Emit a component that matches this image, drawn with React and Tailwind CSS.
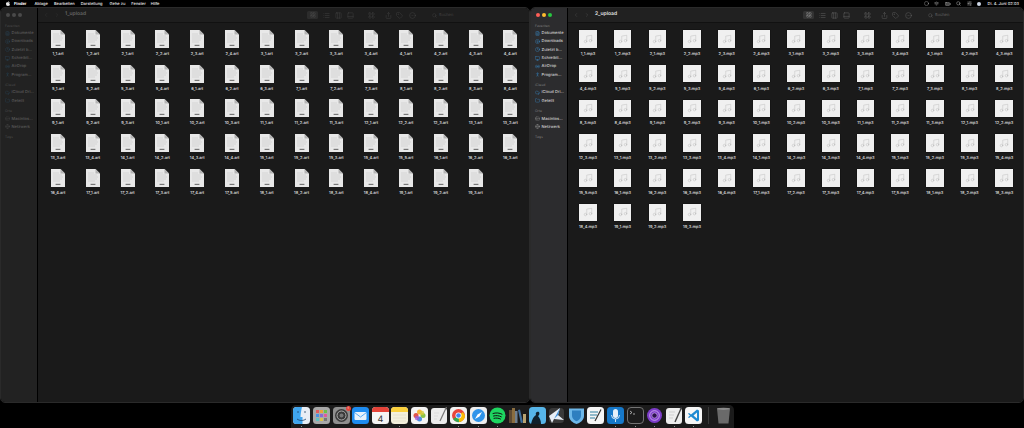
import {
  ChevronLeft,
  ChevronRight,
  Circle,
  CircleArrowDown,
  CircleEllipsis,
  Clock,
  Cloud,
  Columns3,
  FileText,
  Folder,
  Globe,
  HardDrive,
  LayoutGrid,
  List,
  Monitor,
  Music,
  PanelBottom,
  PersonStanding,
  Radio,
  Search,
  Share,
  Tag,
  Wifi,
  BatteryFull,
  SlidersHorizontal,
} from "lucide-react";

const leftFiles = [
  "1_1","1_2","2_1","2_2","2_3","2_4","3_1","3_2","3_3","3_4","4_1","4_2","4_3","4_4",
  "5_1","5_2","5_3","5_4","6_1","6_2","6_3","7_1","7_2","7_3","8_1","8_2","8_3","8_4",
  "9_1","9_2","9_3","10_1","10_2","10_3","11_1","11_2","11_3","12_1","12_2","12_3","13_1","13_2",
  "13_3","13_4","14_1","14_2","14_3","14_4","15_1","15_2","15_3","15_4","15_5","16_1","16_2","16_3",
  "16_4","17_1","17_2","17_3","17_4","17_5","18_1","18_2","18_3","18_4","19_1","19_2","19_3",
];

const rightFiles = [
  "1_1","1_2","2_1","2_2","2_3","2_4","3_1","3_2","3_3","3_4","4_1","4_2","4_3",
  "4_4","5_1","5_2","5_3","5_4","6_1","6_2","6_3","7_1","7_2","7_3","8_1","8_2",
  "8_3","8_4","9_1","9_2","9_3","10_1","10_2","10_3","11_1","11_2","11_3","12_1","12_2",
  "12_3","13_1","13_2","13_3","13_4","14_1","14_2","14_3","14_4","15_1","15_2","15_3","15_4",
  "15_5","16_1","16_2","16_3","16_4","17_1","17_2","17_3","17_4","17_5","18_1","18_2","18_3",
  "18_4","19_1","19_2","19_3",
];

const sidebar = [
  { title: "Favoriten", items: [["Dokumente", FileText], ["Downloads", CircleArrowDown], ["Zuletzt b...", Clock], ["Schreibti...", Monitor], ["AirDrop", Radio], ["Program...", PersonStanding]] },
  { title: "iCloud", items: [["iCloud Dri...", Cloud], ["Geteilt", Folder]] },
  { title: "Orte", items: [["Macintos...", HardDrive, true], ["Netzwerk", Globe, true]] },
  { title: "Tags", items: [] },
];

function ArtIcon() {
  return (
    <svg viewBox="0 0 14 18" className="w-[14px] h-[18px]">
      <path d="M0 0H9.5L14 4.5V18H0Z" fill="#e8e8e8" />
      <path d="M9.5 0V4.5H14Z" fill="#b4b4b4" />
      <path d="M2 4H8M2 6H11M2 8H12M2 10H11M2 12H9" stroke="#cccccc" strokeWidth="0.7" />
      <rect x="4.6" y="14.8" width="4.8" height="1.2" fill="#777777" />
    </svg>
  );
}

function Mp3Icon() {
  return (
    <div className="w-[17.5px] h-[17.5px] bg-[#f0f0f0] flex items-center justify-center shadow-[0_0_1px_#000]">
      <Music size={10} strokeWidth={1} color="#b5b5b5" />
    </div>
  );
}

function FileGrid({ names, ext, cols, Icon }) {
  return (
    <div className={`flex-1 bg-[#1a1a1a] pt-[7px] pl-[2.6px] grid content-start auto-rows-[34.7px] ${cols}`}>
      {names.map((name) => (
        <div key={name} className="flex flex-col items-center">
          <div className="h-[18px] flex items-center">
            <Icon />
          </div>
          <span className="mt-[3px] text-[4px] leading-[5px] font-medium text-[#e4e4e4] whitespace-nowrap">
            {name}.{ext}
          </span>
        </div>
      ))}
    </div>
  );
}

function Sidebar({ active }) {
  const headColor = active ? "text-[#7f7f7f]" : "text-[#4c4c4c]";
  const textColor = active ? "text-[#cfcfcf]" : "text-[#5a5a5a]";
  return (
    <div className={`w-[37px] h-full shrink-0 pl-[4px] border-r border-black ${active ? "bg-[#2c2c2e]" : "bg-[#222222]"}`}>
      <div className="flex gap-[2.5px] h-[14px] items-center pl-[1px]">
        <span className={`w-[3.6px] h-[3.6px] rounded-full ${active ? "bg-[#ff5f57]" : "bg-[#4a4a4a]"}`} />
        <span className={`w-[3.6px] h-[3.6px] rounded-full ${active ? "bg-[#febc2e]" : "bg-[#4a4a4a]"}`} />
        <span className={`w-[3.6px] h-[3.6px] rounded-full ${active ? "bg-[#28c840]" : "bg-[#4a4a4a]"}`} />
      </div>
      {sidebar.map((group) => (
        <div key={group.title} className="mb-[2.5px]">
          <div className={`text-[3.4px] leading-[8px] h-[7px] ${headColor}`}>{group.title}</div>
          {group.items.map(([label, ItemIcon, gray]) => (
            <div key={label} className="flex items-center gap-[1.6px] h-[8.3px]">
              <ItemIcon
                size={5}
                strokeWidth={1.6}
                color={gray ? (active ? "#9a9a9a" : "#4a4a4a") : active ? "#3d9be2" : "#2d4c60"}
              />
              <span className={`text-[4px] font-medium whitespace-nowrap ${textColor}`}>{label}</span>
            </div>
          ))}
        </div>
      ))}
    </div>
  );
}

function Toolbar({ title, active, titleClass }) {
  const c = active ? "#777777" : "#4d4d4d";
  return (
    <div className={`h-[15px] flex items-center shrink-0 border-b border-[#111] ${active ? "bg-[#212121]" : "bg-[#1e1e1e]"}`}>
      <div className="flex items-center gap-[5px] ml-[5px]">
        <ChevronLeft size={6} strokeWidth={1.5} color={active ? "#555" : "#3c3c3c"} />
        <ChevronRight size={6} strokeWidth={1.5} color={active ? "#555" : "#3c3c3c"} />
      </div>
      <span className={`text-[5px] font-semibold ${titleClass} ${active ? "text-[#e6e6e6]" : "text-[#666666]"}`}>
        {title}
      </span>
      <div className="flex items-center gap-[5px]">
        <span className={`w-[11px] h-[8px] rounded-[1.5px] flex items-center justify-center ${active ? "bg-[#333333]" : "bg-[#2c2c2c]"}`}>
          <LayoutGrid size={6} strokeWidth={1.5} color={active ? "#aaa" : "#555"} />
        </span>
        <List size={7} strokeWidth={1.3} color={c} />
        <Columns3 size={7} strokeWidth={1.3} color={c} />
        <PanelBottom size={7} strokeWidth={1.3} color={c} />
      </div>
      <div className="flex items-center ml-[14px]">
        <LayoutGrid size={7} strokeWidth={1.3} color={c} />
        <Share size={7} strokeWidth={1.2} color={c} className="ml-[10px]" />
        <Tag size={7} strokeWidth={1.2} color={c} className="ml-[4px]" />
        <CircleEllipsis size={7} strokeWidth={1.2} color={c} className="ml-[6px]" />
      </div>
      <div className="flex items-center gap-[2px] ml-[16px]">
        <Search size={5} strokeWidth={1.5} color={c} />
        <span className={`text-[4px] ${active ? "text-[#666]" : "text-[#444]"}`}>Suchen</span>
      </div>
    </div>
  );
}

function FinderWindow({ title, active, width, titleClass, children }) {
  return (
    <div className={`${width} h-full flex rounded-[5px] overflow-hidden border border-[#2a2a2a]`}>
      <Sidebar active={active} />
      <div className="flex-1 flex flex-col min-w-0">
        <Toolbar title={title} active={active} titleClass={titleClass} />
        {children}
      </div>
    </div>
  );
}

function MenuBar() {
  const menus = [
    ["Ablage", "ml-[8px]"],
    ["Bearbeiten", "ml-[6px]"],
    ["Darstellung", "ml-[6px]"],
    ["Gehe zu", "ml-[7px]"],
    ["Fenster", "ml-[6px]"],
    ["Hilfe", "ml-[5px]"],
  ];
  return (
    <div className="h-[7px] shrink-0 bg-black flex items-center text-[4px] font-medium text-[#e8e8e8] pl-[6px] pr-[5px]">
      <svg viewBox="0 0 10 12" className="w-[4px] h-[5px]" fill="#e8e8e8">
        <path d="M7 0C7 1.5 6 2.8 4.8 2.8 4.7 1.4 5.8.2 7 0ZM8.3 6.3C8.3 4.9 9.2 4.2 9.6 3.9 8.9 3 7.9 2.8 7.4 2.8 6.5 2.8 5.6 3.3 5.1 3.3 4.6 3.3 3.8 2.8 3 2.8 1.600 2.9 0 4 0 6.500 0 8.500 1.700 12 3.200 12 3.900 12 4.400 11.500 5.200 11.500 6 11.500 6.400 12 7.200 12 8.500 12 9.500 9.800 9.900 8.700 8.900 8.200 8.300 7.400 8.300 6.300Z" />
      </svg>
      <span className="ml-[4px] font-bold text-white">Finder</span>
      {menus.map(([label, ml]) => (
        <span key={label} className={ml}>
          {label}
        </span>
      ))}
      <div className="ml-auto flex items-center gap-[5.5px]">
        <Circle size={5} strokeWidth={1.5} color="#ddd" />
        <Wifi size={5} strokeWidth={1.8} color="#ddd" />
        <BatteryFull size={6} strokeWidth={1.5} color="#ddd" />
        <Search size={5} strokeWidth={1.8} color="#ddd" />
        <SlidersHorizontal size={5} strokeWidth={1.8} color="#ddd" />
        <span className="w-[4px] h-[4px] rounded-full bg-[#cfd8e8]" />
        <span className="ml-[1px] whitespace-nowrap">Di. 4. Juni 02:03</span>
      </div>
    </div>
  );
}

const dockIcons = [
  // finder
  { dot: true, svg: <><rect width="17" height="17" rx="3.500" fill="#e8eef5" /><path d="M3.500 0H9C8 4 7.500 8 7.500 10H9.500V17H3.500A3.500 3.500 0 0 1 0 13.500V3.500A3.500 3.500 0 0 1 3.500 0Z" fill="#3fa5ee" /><path d="M5 4V6M12 4V6M4 12C7 14 10 14 13 12" stroke="#1d3f66" strokeWidth=".8" fill="none" /></> },
  // launchpad
  { svg: <><rect width="17" height="17" rx="3.500" fill="#a9a9a9" /><rect x="3" y="3" width="3" height="3" fill="#e25b5b" /><rect x="7" y="3" width="3" height="3" fill="#e9a23b" /><rect x="11" y="3" width="3" height="3" fill="#6cc04a" /><rect x="3" y="7" width="3" height="3" fill="#4a90e2" /><rect x="7" y="7" width="3" height="3" fill="#8a6bd1" /><rect x="11" y="7" width="3" height="3" fill="#e25b9a" /><rect x="3" y="11" width="3" height="3" fill="#5fc2c0" /><rect x="7" y="11" width="3" height="3" fill="#d9c24a" /><rect x="11" y="11" width="3" height="3" fill="#777" /></> },
  // settings with badge
  { badge: true, svg: <><rect width="17" height="17" rx="3.500" fill="#8f8f8f" /><circle cx="8.500" cy="8.500" r="6.500" fill="#3a3a3a" /><circle cx="8.500" cy="8.500" r="4.500" fill="none" stroke="#aaa" strokeWidth="1" /><circle cx="8.500" cy="8.500" r="2" fill="#777" /></> },
  // mail
  { svg: <><rect width="17" height="17" rx="3.500" fill="#1e8cf0" /><rect x="2.500" y="5" width="12" height="8" rx="1" fill="#e8f2fc" /><path d="M2.500 5.500L8.500 10L14.500 5.500" stroke="#1e8cf0" strokeWidth=".7" fill="none" /></> },
  // calendar
  { svg: <><rect width="17" height="17" rx="3.500" fill="#f5f5f5" /><path d="M3.500 0H13.500A3.500 3.500 0 0 1 17 3.500V5H0V3.500A3.500 3.500 0 0 1 3.500 0Z" fill="#e5443a" /><text x="8.500" y="14.500" textAnchor="middle" fontSize="9" fill="#333" fontFamily="Inter, sans-serif">4</text></> },
  // notes
  { dot: true, svg: <><rect width="17" height="17" rx="3.500" fill="#f4f0dc" /><path d="M3.500 0H13.500A3.500 3.500 0 0 1 17 3.500V5H0V3.500A3.500 3.500 0 0 1 3.500 0Z" fill="#fbd13e" /><path d="M2 8H15M2 11H15M2 14H15" stroke="#d9d5c2" strokeWidth=".5" /></> },
  // photos
  { svg: <><rect width="17" height="17" rx="3.500" fill="#f4f4f4" /><circle cx="8.500" cy="5" r="2.500" fill="#f4b63a" /><circle cx="12" cy="8.500" r="2.500" fill="#8bc34a" /><circle cx="8.500" cy="12" r="2.500" fill="#4a8fe2" /><circle cx="5" cy="8.500" r="2.500" fill="#e2574a" /><circle cx="11" cy="6" r="2.200" fill="#d6c83a" opacity=".8" /><circle cx="6" cy="11" r="2.200" fill="#a05ad1" opacity=".8" /></> },
  // freeform-like notepad
  { svg: <><rect y="1" width="16" height="16" rx="3" fill="#ececec" /><path d="M9 14L15.500 0" stroke="#777" strokeWidth="1.200" /><path d="M3 6H8M3 9H7M3 12H6" stroke="#ccc" strokeWidth=".5" /></> },
  // chrome
  { dot: true, svg: <><rect width="17" height="17" rx="3.500" fill="#f2f2f2" /><circle cx="8.500" cy="8.500" r="6.500" fill="#e8453c" /><path d="M3 12A6.500 6.500 0 0 0 11 14.500L8.500 8.500Z" fill="#34a853" /><path d="M15 8.500A6.500 6.500 0 0 1 9 15L8.500 8.500L13 5Z" fill="#fbbc05" /><circle cx="8.500" cy="8.500" r="3" fill="#fff" /><circle cx="8.500" cy="8.500" r="2.300" fill="#4285f4" /></> },
  // safari
  { dot: true, svg: <><rect width="17" height="17" rx="3.500" fill="#efefef" /><circle cx="8.500" cy="8.500" r="6.500" fill="#2f94ea" /><path d="M12 5L9.500 9.500L5 12L7.500 7.500Z" fill="#fff" /></> },
  // spotify
  { dot: true, svg: <><circle cx="8.500" cy="8.500" r="8" fill="#1ed760" /><path d="M4 6.500C7 5.500 10.500 5.800 13 7.200M4.500 9C7 8.300 10 8.500 12.300 9.800M5 11.300C7 10.800 9.500 11 11.500 12" stroke="#111" strokeWidth="1" fill="none" strokeLinecap="round" /></> },
  // books shelf
  { svg: <><rect x="0" y="3" width="3" height="13" fill="#5d4a33" /><rect x="3" y="1" width="3" height="15" fill="#8a6d3f" /><rect x="6" y="4" width="2.500" height="12" fill="#6f7f8f" /><path d="M9 3L11 2.500L14 15.500L11.800 16Z" fill="#3f6f9f" /><rect x="14" y="7" width="3" height="9" fill="#b9a472" /></> },
  // reader app
  { svg: <><rect width="17" height="17" rx="3.500" fill="#57b5e8" /><path d="M2 17C3 12 5 9 7 8C6 5.500 8 4 10 5C11 7 10 8.500 9 9C11 11 12 14 12 17Z" fill="#10212c" /></> },
  // white and blue paper plane
  { svg: <><rect x="1" y="1" width="15" height="15" rx="3.500" fill="#3a3a3a" /><path d="M1 9L12 1L10 8L16 13L6 12L4 16Z" fill="#e8eef5" /><path d="M12 1L10 8L6 12Z" fill="#3f8fd9" /></> },
  // shield
  { svg: <><path d="M1 1.500H16V9C16 13 12 16 8.500 17C5 16 1 13 1 9Z" fill="#6db7e8" /><path d="M4 3.500H13V9C13 11.500 10.500 13.500 8.500 14.300C6.500 13.500 4 11.500 4 9Z" fill="#2e7fc0" /></> },
  // checklist
  { svg: <><rect width="17" height="17" rx="3.500" fill="#f6f6f6" /><path d="M3 5H11M3 8H10M3 11H8" stroke="#2f7f9f" strokeWidth="1" /><path d="M8 14L14 2.500" stroke="#333" strokeWidth="1.200" /></> },
  // mic
  { dot: true, svg: <><rect width="17" height="17" rx="3.500" fill="#1678c9" /><rect x="6" y="2" width="5" height="9" rx="2.500" fill="#e6f1fa" /><path d="M4.500 8A4 4 0 0 0 12.500 8M8.500 12V15" stroke="#cfe4f5" strokeWidth="1" fill="none" /></> },
  // terminal
  { dot: true, svg: <><rect x=".5" y=".5" width="16" height="16" rx="3.500" fill="#1c1c1c" stroke="#8a8a8a" strokeWidth=".8" /><path d="M3 4L5 5.500L3 7" stroke="#ddd" strokeWidth=".7" fill="none" /><path d="M6 7H8" stroke="#ddd" strokeWidth=".7" /></> },
  // tor browser
  { dot: true, svg: <><circle cx="8.500" cy="8.500" r="7.500" fill="#7d3cc9" /><circle cx="8.500" cy="8.500" r="4.800" fill="none" stroke="#d9bdf5" strokeWidth=".8" /><circle cx="8.500" cy="8.500" r="2.600" fill="#2c1050" stroke="#d9bdf5" strokeWidth=".6" /></> },
  // pen on paper
  { dot: true, svg: <><rect y="1" width="16" height="16" rx="3" fill="#ededed" /><path d="M3 5H9M3 8H8M3 11H7" stroke="#c4c4c4" strokeWidth=".7" /><path d="M9 15L15.500 .5" stroke="#444" strokeWidth="1.400" /></> },
  // vscode
  { dot: true, svg: <><rect width="17" height="17" rx="3.500" fill="#f6f6f6" /><path d="M12 2.500L14 3.500V13.500L12 14.500L6 9.500L4 11L3 10.300L5 8.500L3 6.700L4 6L6 7.500ZM12 5.500L8.500 8.500L12 11.500Z" fill="#1f8ad2" /></> },
];

function Dock() {
  return (
    <div className="flex-1 bg-black flex justify-center pt-[2px] pl-[1px]">
      <div className="flex gap-[2.6px] h-[23px] px-[2px] pt-[2px] bg-[#1b1b1b] rounded-t-[5px]">
        {dockIcons.map((icon, i) => (
          <div key={i} className="relative w-[17px] flex flex-col items-center">
            <svg viewBox="0 0 17 17" className="w-[17px] h-[17px]">
              {icon.svg}
            </svg>
            {icon.dot && <span className="mt-[1.5px] w-[1px] h-[1px] rounded-full bg-[#bbb]" />}
            {icon.badge && (
              <span className="absolute -top-[1px] -right-[1px] w-[5px] h-[5px] rounded-full bg-[#e5443a] text-white text-[3px] leading-[5px] text-center">
                1
              </span>
            )}
          </div>
        ))}
        <div className="w-px h-[17px] bg-[#3a3a3a] mx-[3px]" />
        <svg viewBox="0 0 17 17" className="w-[17px] h-[17px]">
          <path d="M2 1.500H15L13.500 16.500H3.500Z" fill="#6a6a6a" />
          <ellipse cx="8.500" cy="1.800" rx="6.500" ry="1.100" fill="#8c8c8c" />
        </svg>
      </div>
    </div>
  );
}

export default function App() {
  return (
    <div className="w-[1024px] h-[428px] overflow-hidden bg-black flex flex-col font-['Inter',sans-serif] [text-rendering:geometricPrecision]">
      <MenuBar />
      <div className="h-[396px] flex shrink-0">
        <FinderWindow title="1_upload" width="w-[530px]" titleClass="ml-[5px] w-[242px]">
          <FileGrid names={leftFiles} ext="art" cols="grid-cols-[repeat(14,34.8px)]" Icon={ArtIcon} />
        </FinderWindow>
        <FinderWindow title="2_upload" active width="w-[494px]" titleClass="ml-[5px] w-[208px]">
          <FileGrid names={rightFiles} ext="mp3" cols="grid-cols-[repeat(13,34.7px)]" Icon={Mp3Icon} />
        </FinderWindow>
      </div>
      <Dock />
    </div>
  );
}
